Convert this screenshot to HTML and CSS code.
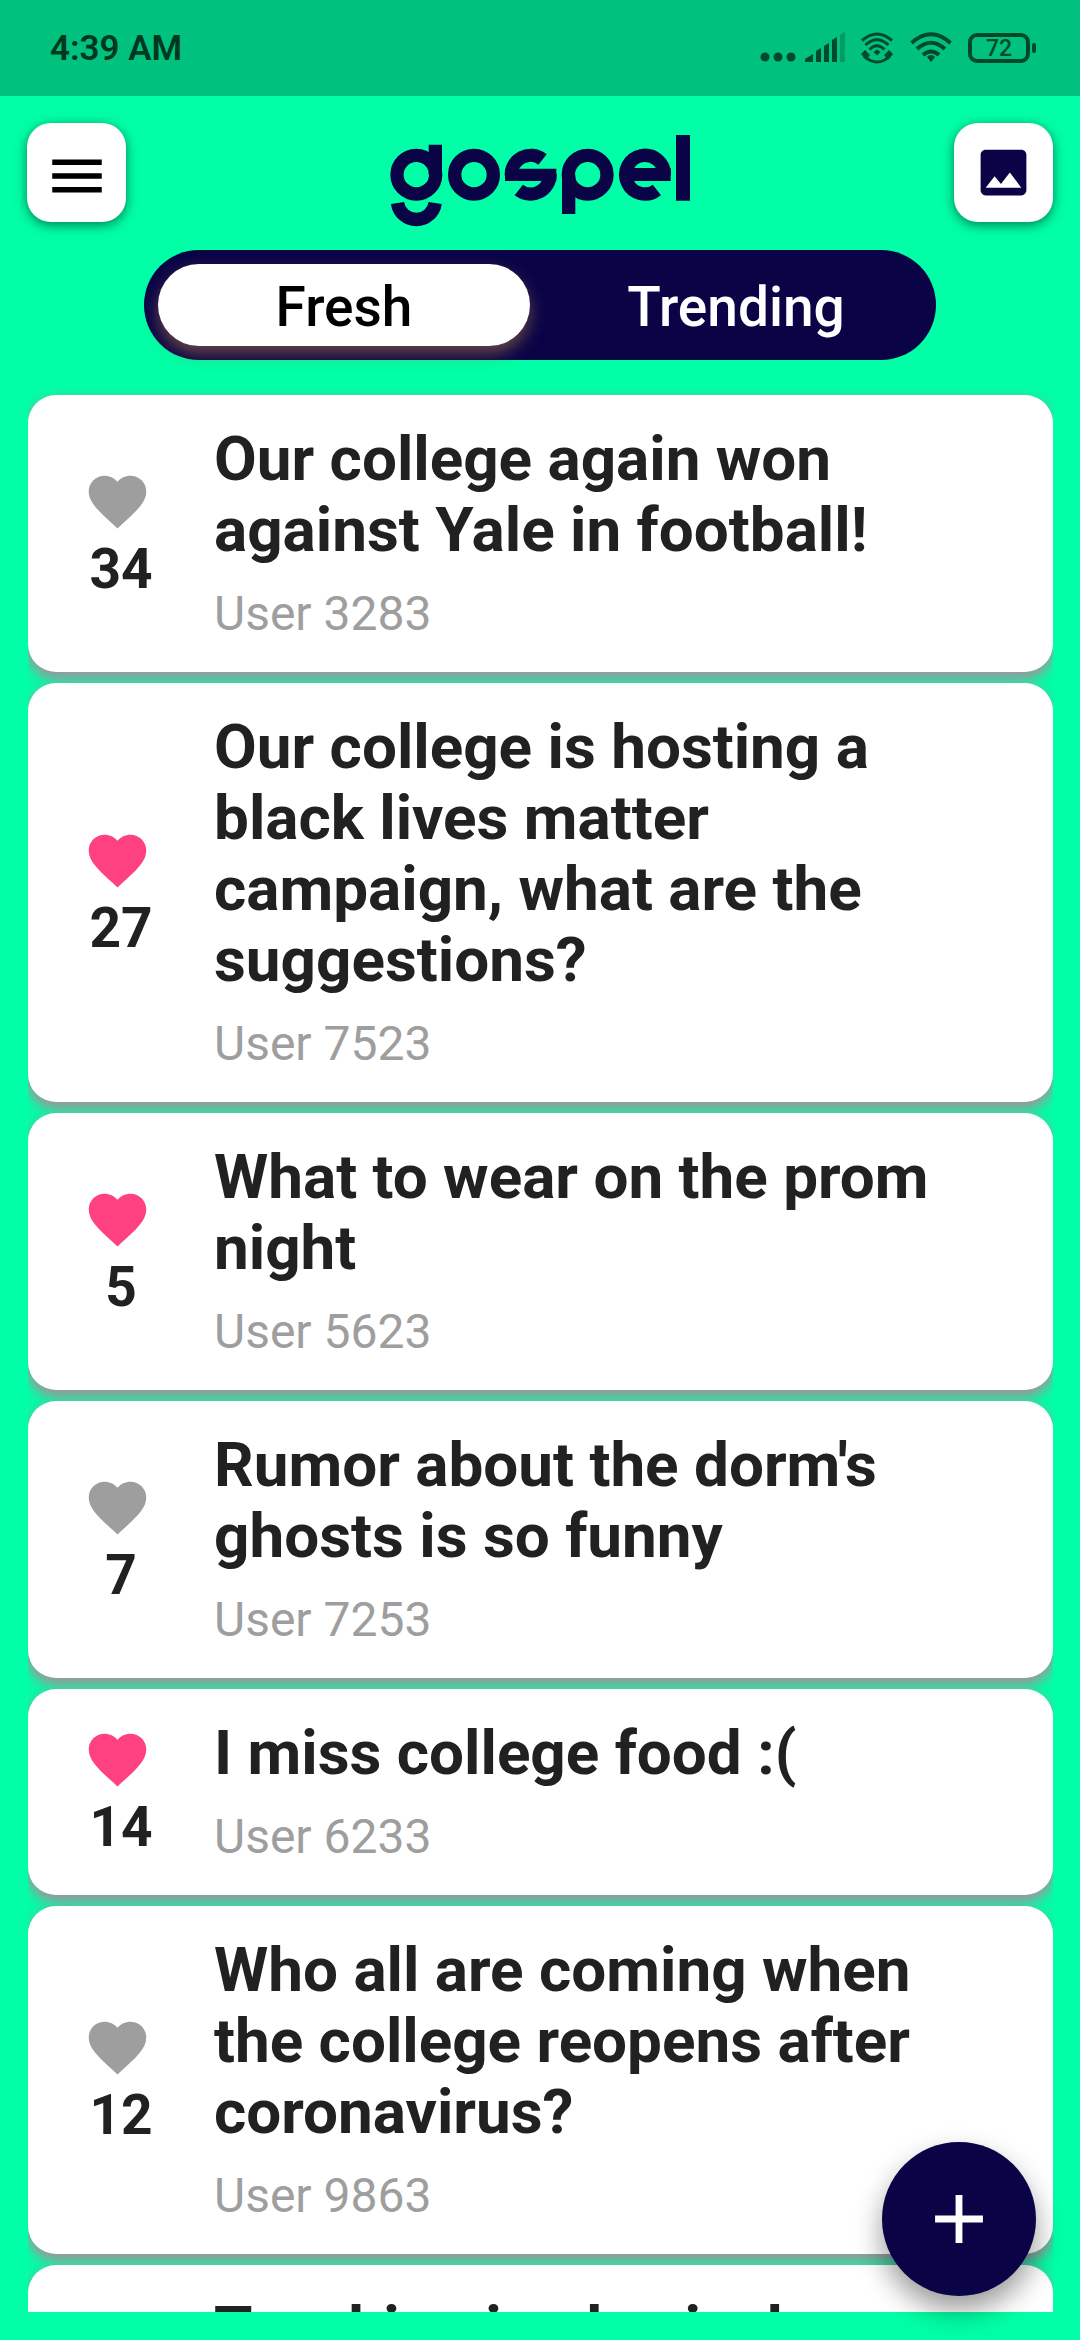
FILE: index.html
```html
<!DOCTYPE html>
<html lang="en">
<head>
<meta charset="utf-8">
<meta name="viewport" content="width=device-width, initial-scale=1">
<title>gospel</title>
<link rel="stylesheet" href="styles.css">
</head>
<body>
<svg class="sprite" aria-hidden="true">
  <symbol id="heart" viewBox="0 0 24 24"><path d="M12 21.35l-1.45-1.32C5.4 15.36 2 12.28 2 8.5 2 5.42 4.42 3 7.5 3c1.74 0 3.41.81 4.5 2.09C13.09 3.81 14.76 3 16.5 3 19.58 3 22 5.42 22 8.5c0 3.78-3.4 6.86-8.55 11.54L12 21.35z"/></symbol>
</svg>

<div class="status">
  <time class="clock">4:39 AM</time>
  <div class="indicators">
    <svg width="36" height="32" viewBox="0 0 36 32" aria-hidden="true"><circle cx="5" cy="25" r="4.5"/><circle cx="18" cy="25" r="4.5"/><circle cx="31" cy="25" r="4.5"/></svg>
    <svg class="signal" width="40" height="32" viewBox="0 0 40 32" aria-hidden="true"><path d="M0 30v-3l8-5v8zM11 30V19l5-3v14zM19 30V14l5-3v19zM27 30V8l5-3v25z"/><path opacity=".3" d="M35 30V3l5-3v30z"/></svg>
    <svg class="calling" width="34" height="32" viewBox="0 0 34 32" aria-hidden="true"><g fill="none" stroke="currentColor" stroke-width="3"><path d="M2 8.500Q17-4.500 32 8.500M5.500 13Q17 2.500 28.500 13M9.500 17.500Q17 10 24.500 17.500"/><path d="M4 24Q17 36 30 24"/></g><path d="M17 17.500l3.500 2.500-3.500 3.500-3.500-3.500z"/><path d="M1 22l4-4 5 5-4 5zM33 22l-4-4-5 5 4 5z"/></svg>
    <svg class="wifi" width="42" height="32" viewBox="0 0 42 32" aria-hidden="true"><path fill="none" stroke="currentColor" stroke-width="4" d="M1.500 11Q21-6.500 40.500 11M7 17Q21 4.500 35 17M13 23Q21 16 29 23"/><path d="M21 23c2 0 3 .8 4 2l-4 5-4-5c1-1.200 2-2 4-2z"/></svg>
    <span class="battery"><span class="cell">72</span></span>
  </div>
</div>

<header class="top">
  <button class="square" type="button" aria-label="Menu">
    <svg class="menu-icon" viewBox="0 0 24 24" aria-hidden="true"><path d="M3 18h18v-2H3v2zm0-5h18v-2H3v2zm0-7v2h18V6H3z"/></svg>
  </button>
  <svg class="logo" viewBox="60 75 900 276" role="img" aria-label="gospel">
    <g fill="none" stroke="currentColor" stroke-width="40">
      <circle cx="139" cy="194" r="58"/>
      <path d="M196 104v90M82.500 279a57 57 0 0 0 113 0"/>
      <circle cx="312" cy="194" r="58"/>
      <path d="M424 196a58 58 0 0 1 93.700-47.700M540 192a58 58 0 0 1-93.700 47.700"/>
      <path stroke-width="37" d="M405 194.500h154"/>
      <circle cx="653" cy="194" r="58"/>
      <path d="M596 194v118"/>
      <path d="M883 196a58 58 0 1 0-22.300 43.700"/>
      <path stroke-width="39" d="M752 193.500h150"/>
      <path stroke-width="42" d="M939 75v197"/>
    </g>
  </svg>
  <button class="square" type="button" aria-label="Pictures">
    <svg class="image-icon" viewBox="0 0 24 24" aria-hidden="true"><path d="M21 19V5c0-1.100-.9-2-2-2H5c-1.100 0-2 .9-2 2v14c0 1.100.9 2 2 2h14c1.100 0 2-.9 2-2zM8.500 13.500l2.500 3.010L14.500 12l4.500 6H5l3.500-4.500z"/></svg>
  </button>
</header>

<nav class="tabs" aria-label="Feed order">
  <button class="tab active" type="button" aria-pressed="true">Fresh</button>
  <button class="tab" type="button" aria-pressed="false">Trending</button>
</nav>

<main class="feed">
  <article class="card">
    <div class="votes"><button class="like" type="button" aria-label="Like"><svg class="heart"><use href="#heart"/></svg></button><span class="count">34</span></div>
    <div class="post"><h2 class="title">Our college again won against Yale in football!</h2><p class="author">User 3283</p></div>
  </article>
  <article class="card">
    <div class="votes"><button class="like liked" type="button" aria-label="Unlike"><svg class="heart"><use href="#heart"/></svg></button><span class="count">27</span></div>
    <div class="post"><h2 class="title">Our college is hosting a black lives matter campaign, what are the suggestions?</h2><p class="author">User 7523</p></div>
  </article>
  <article class="card">
    <div class="votes"><button class="like liked" type="button" aria-label="Unlike"><svg class="heart"><use href="#heart"/></svg></button><span class="count">5</span></div>
    <div class="post"><h2 class="title">What to wear on the prom night</h2><p class="author">User 5623</p></div>
  </article>
  <article class="card">
    <div class="votes"><button class="like" type="button" aria-label="Like"><svg class="heart"><use href="#heart"/></svg></button><span class="count">7</span></div>
    <div class="post"><h2 class="title">Rumor about the dorm's ghosts is so funny</h2><p class="author">User 7253</p></div>
  </article>
  <article class="card">
    <div class="votes"><button class="like liked" type="button" aria-label="Unlike"><svg class="heart"><use href="#heart"/></svg></button><span class="count">14</span></div>
    <div class="post"><h2 class="title">I miss college food :(</h2><p class="author">User 6233</p></div>
  </article>
  <article class="card">
    <div class="votes"><button class="like" type="button" aria-label="Like"><svg class="heart"><use href="#heart"/></svg></button><span class="count">12</span></div>
    <div class="post"><h2 class="title">Who all are coming when the college reopens after coronavirus?</h2><p class="author">User 9863</p></div>
  </article>
  <article class="card">
    <div class="post solo"><h2 class="title">Teaching in physical</h2></div>
  </article>
</main>

<button class="fab" type="button" aria-label="New post">
  <svg class="add-icon" viewBox="0 0 24 24" aria-hidden="true"><path d="M19 13h-6v6h-2v-6H5v-2h6V5h2v6h6v2z"/></svg>
</button>
</body>
</html>
```

FILE: styles.css
```css
:root {
  --mint: #00ffa6;
  --navy: #0a0447;
  --ink: #212121;
  --grey: #9e9e9e;
  --pink: #ff4081;
}

* {
  box-sizing: border-box;
}

body {
  display: flex;
  flex-direction: column;
  height: 100vh;
  margin: 0;
  padding-bottom: 28px;
  background: var(--mint);
  color: var(--ink);
  font-family: Roboto, "Liberation Sans", sans-serif;
}

button {
  display: flex;
  align-items: center;
  justify-content: center;
  padding: 0;
  border: 0;
  background: none;
  color: inherit;
  font: inherit;
}

svg {
  display: block;
  flex: none;
  fill: currentColor;
}

.sprite {
  display: none;
}

/* Status bar */
.status {
  display: flex;
  flex: none;
  align-items: center;
  justify-content: space-between;
  height: 96px;
  padding: 0 44px 0 50px;
  background: #00c17d;
  color: #00381f;
}

.clock {
  padding-top: 2px;
  font-size: 35px;
  font-weight: 600;
  line-height: 40px;
}

.indicators {
  display: flex;
  align-items: center;
  color: #004a2b;
}

.signal {
  margin-left: 9px;
}

.calling {
  margin-left: 15px;
}

.wifi {
  margin: 0 16px;
}

.battery {
  display: flex;
  align-items: center;
}

.battery::after {
  width: 4px;
  height: 10px;
  margin-left: 2px;
  border-radius: 2px;
  background: currentColor;
  content: "";
}

.cell {
  width: 62px;
  height: 30px;
  border: 4px solid currentColor;
  border-radius: 9px;
  font-size: 23px;
  font-weight: 500;
  line-height: 24px;
  text-align: center;
}

/* Header */
.top {
  display: flex;
  flex: none;
  justify-content: space-between;
  margin-top: 27px;
  padding: 0 27px;
}

.square {
  width: 99px;
  height: 99px;
  border-radius: 24px;
  background: #fff;
  box-shadow: 0 3px 12px rgba(0, 0, 0, .5);
}

.menu-icon {
  width: 66px;
  height: 66px;
  margin-top: 6px;
  color: #000;
}

.image-icon {
  width: 61px;
  height: 61px;
  color: var(--navy);
}

.logo {
  width: 300px;
  height: 92px;
  margin-top: 12px;
  color: var(--navy);
}

/* Tabs */
.tabs {
  display: flex;
  flex: none;
  gap: 20px;
  align-self: center;
  width: 792px;
  max-width: 90%;
  height: 110px;
  margin-top: 23px;
  padding: 14px;
  border-radius: 55px;
  background: var(--navy);
}

.tab {
  flex: 1 1 0;
  padding-top: 3px;
  border-radius: 41px;
  color: #fff;
  font-size: 55px;
  font-weight: 500;
  line-height: 64px;
}

.tab.active {
  background: #fff;
  box-shadow: 0 8px 16px rgba(160, 112, 72, .6);
  color: #000;
}

/* Feed */
.feed {
  display: flex;
  flex: 1;
  flex-direction: column;
  gap: 11px;
  min-height: 0;
  margin: 14px 27px 0 28px;
  padding-top: 21px;
  overflow-y: auto;
  scrollbar-width: none;
}

.card {
  display: flex;
  flex: none;
  align-items: center;
  border-radius: 28px;
  background: #fff;
  box-shadow: 0 6px 14px rgba(203, 118, 156, .9);
}

.votes {
  display: flex;
  flex: none;
  flex-direction: column;
  align-items: center;
  width: 186px;
}

.like {
  margin-right: 8px;
  color: var(--grey);
}

.like.liked {
  color: var(--pink);
}

.heart {
  width: 69px;
  height: 69px;
}

.count {
  margin-top: 1px;
  font-size: 55px;
  font-weight: 700;
  line-height: 64px;
}

.post {
  flex: 1;
  padding: 28px 68px 30px 0;
}

.post.solo {
  padding-left: 186px;
}

.title {
  margin: 0;
  font-size: 62px;
  font-weight: 700;
  line-height: 71px;
}

.author {
  margin: 21px 0 0;
  color: var(--grey);
  font-size: 48px;
  line-height: 56px;
}

/* Floating action button */
.fab {
  position: fixed;
  right: 44px;
  bottom: 44px;
  width: 154px;
  height: 154px;
  border-radius: 50%;
  background: var(--navy);
  box-shadow: 0 14px 28px rgba(0, 0, 0, .4);
  color: #fff;
}

.add-icon {
  width: 82px;
  height: 82px;
}
```
